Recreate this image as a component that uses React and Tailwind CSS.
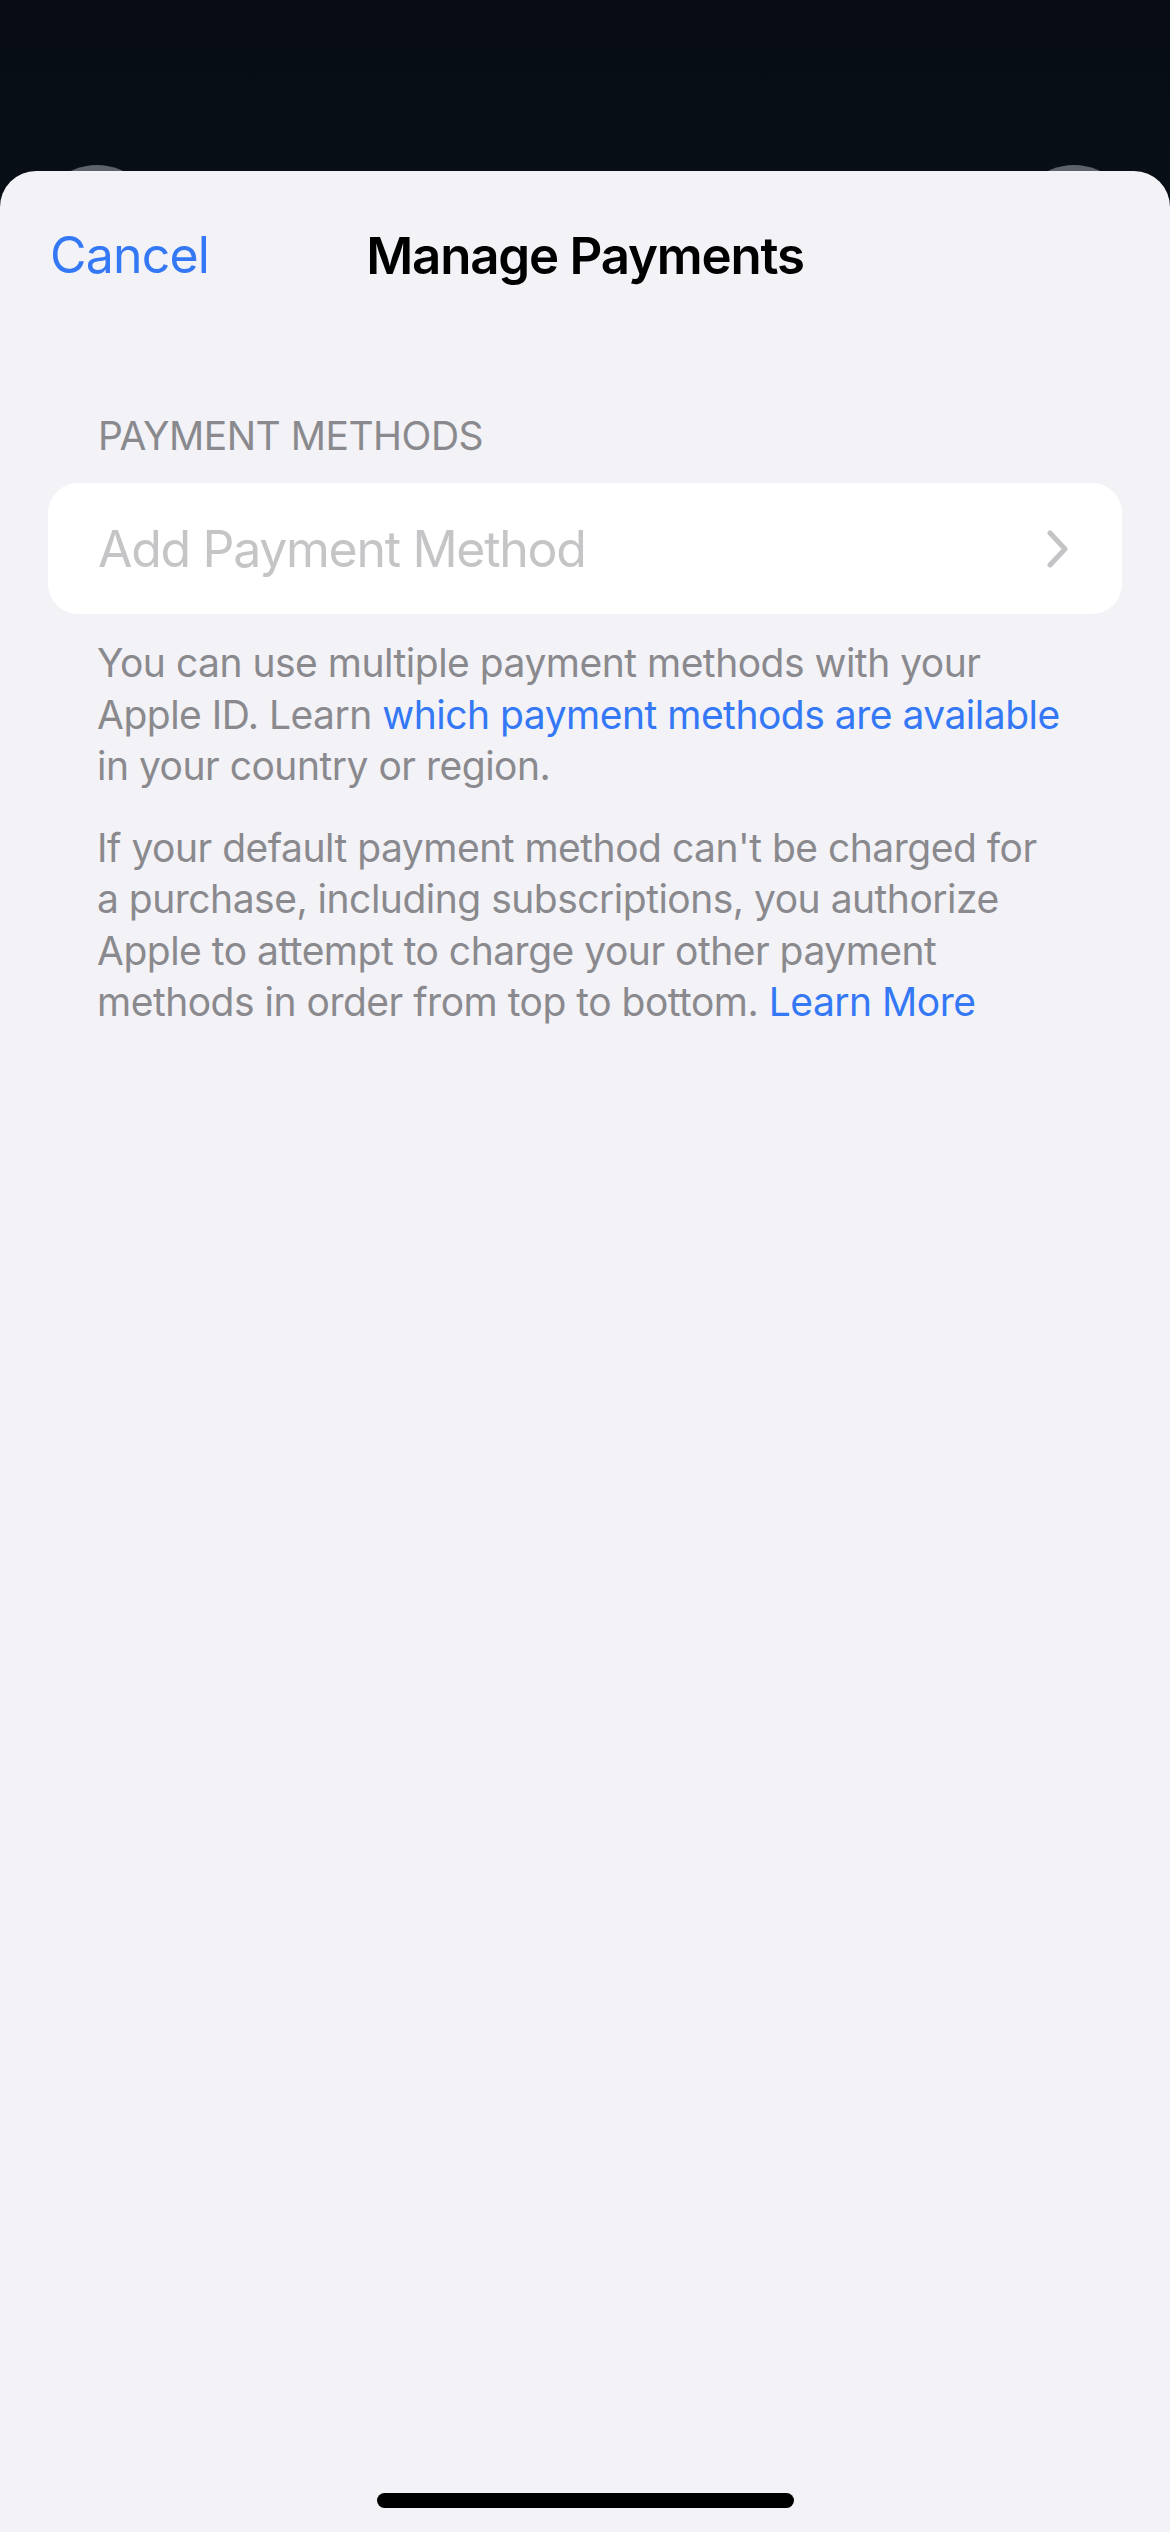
import React from 'react';

const font = { fontFamily: 'Inter, "Noto Sans", sans-serif' };

function Chevron() {
    return (
        <svg width="22" height="38" viewBox="0 0 22 38" fill="none" stroke="#c4c4c7" strokeWidth="5" strokeLinecap="round" strokeLinejoin="round">
            <polyline points="3 3 18 19 3 35" />
        </svg>
    );
}

export default function App() {
    return (
        <div className="w-[1170px] h-[2532px] flex flex-col bg-gradient-to-b from-[#080d15] to-[#121c2d] overflow-hidden" style={font}>
            {/* dimmed screen behind the sheet */}
            <div className="h-[171px] shrink-0 relative">
                <div className="absolute left-[37px] top-[165px] w-[120px] h-[120px] rounded-full bg-[#5c636b]" />
                <div className="absolute left-[1014px] top-[165px] w-[120px] h-[120px] rounded-full bg-[#5c636b]" />
            </div>

            <div className="flex-1 relative z-10 bg-[#f2f2f7] rounded-t-[36px] flex flex-col">
                <div className="h-[168px] grid grid-cols-[1fr_auto_1fr] items-center">
                    <button className="justify-self-start pl-[50px] text-[50px] leading-none tracking-[-0.8px] text-[#3478f6]">Cancel</button>
                    <h1 className="text-[51px] leading-none font-semibold text-black tracking-[-1.2px]">Manage Payments</h1>
                    <div />
                </div>

                <div className="mt-[73px] px-[98px] text-[39px] leading-[48px] tracking-[-0.5px] text-[#8a8a8e]">PAYMENT METHODS</div>

                <button className="mt-[23px] mx-[48px] h-[131px] rounded-[30px] bg-white flex items-center justify-between pl-[50px] pr-[53px]">
                    <span className="text-[50px] leading-none tracking-[-1.3px] text-[#c5c5c7]">Add Payment Method</span>
                    <Chevron />
                </button>

                <div className="mt-[23px] pl-[97px] pr-[106px] text-[39px] leading-[51.5px] tracking-[-0.5px] text-[#8a8a8e]">
                    <p>
                        You can use multiple payment methods with your Apple ID. Learn{' '}
                        <span className="text-[#3478f6]">which payment methods are available</span> in your country or region.
                    </p>
                    <p className="mt-[30px]">
                        If your default payment method can't be charged for a purchase, including subscriptions, you authorize
                        Apple to attempt to charge your other payment methods in order from top to bottom.{' '}
                        <span className="text-[#3478f6]">Learn More</span>
                    </p>
                </div>

                <div className="mt-auto pb-[24px] flex justify-center">
                    <div className="w-[417px] h-[15px] rounded-full bg-black" />
                </div>
            </div>
        </div>
    );
}
